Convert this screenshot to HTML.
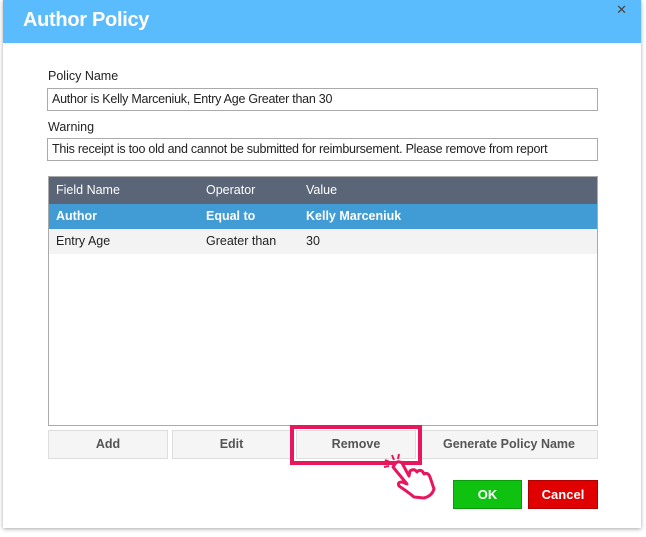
<!DOCTYPE html>
<html><head><style>
body{margin:0;width:646px;height:537px;background:#fff;font-family:"Liberation Sans",sans-serif;position:relative;overflow:hidden}
.dlg{position:absolute;left:3px;top:0;width:638px;height:528px;background:#fff;box-shadow:0 1px 4px rgba(0,0,0,.35)}
.hd{position:absolute;left:0;top:0;width:638px;height:43px;background:#5bbcfd}
.hd b{position:absolute;left:20px;top:9px;color:#fff;font-size:20px;letter-spacing:-0.3px}
.x{position:absolute;right:14px;top:2px;font-size:13px;color:#444}
.lbl{position:absolute;left:48px;font-size:12.5px;color:#222}
.in{position:absolute;left:47px;width:545px;height:21px;border:1px solid #aaa;font-size:12.5px;letter-spacing:-0.25px;line-height:21px;padding-left:4px;color:#222;white-space:nowrap;overflow:hidden}
.tbl{position:absolute;left:48px;top:176px;width:548px;height:248px;border:1px solid #aaa}
.r{position:absolute;left:0;width:548px;font-size:12.5px}
.r span{position:absolute;top:6px}
.btn{position:absolute;top:430px;height:29px;border:1px solid #ddd;background:#f5f5f5;color:#555;font-size:12.5px;font-weight:bold;text-align:center;line-height:27px;box-sizing:border-box}
</style></head><body>
<div class="dlg">
<div class="hd"><b>Author Policy</b><span class="x">✕</span></div>
</div>
<div class="lbl" style="top:69px">Policy Name</div>
<div class="in" style="top:88px">Author is Kelly Marceniuk, Entry Age Greater than 30</div>
<div class="lbl" style="top:120px">Warning</div>
<div class="in" style="top:138px">This receipt is too old and cannot be submitted for reimbursement. Please remove from report</div>
<div class="tbl">
<div class="r" style="top:0;height:27px;background:#5a6577;color:#fff"><span style="left:7px">Field Name</span><span style="left:157px">Operator</span><span style="left:257px">Value</span></div>
<div class="r" style="top:27px;height:25px;background:#419bd5;color:#fff;font-weight:bold"><span style="left:7px;top:5px">Author</span><span style="left:157px;top:5px">Equal to</span><span style="left:257px;top:5px">Kelly Marceniuk</span></div>
<div class="r" style="top:52px;height:25px;background:#f3f3f3;color:#222"><span style="left:7px;top:5px">Entry Age</span><span style="left:157px;top:5px">Greater than</span><span style="left:257px;top:5px">30</span></div>
</div>
<div class="btn" style="left:48px;width:120px">Add</div>
<div class="btn" style="left:172px;width:119px">Edit</div>
<div class="btn" style="left:296px;width:120px">Remove</div>
<div class="btn" style="left:420px;width:178px">Generate Policy Name</div>
<div style="position:absolute;left:290px;top:425px;width:124px;height:32px;border:4px solid #e8175d"></div>
<svg style="position:absolute;left:382px;top:452px" width="60" height="50" viewBox="0 0 60 50">
<g stroke="#e8175d" stroke-width="3" fill="#fff" stroke-linecap="round" stroke-linejoin="round">
<path d="M13 12 Q16 8 20 11 L27 24 L28 19 Q32 16 35 20 L36 19 Q40 17 42 22 Q46 20 48 25 L52 37 Q50 44 42 46 L32 45 Q26 40 17 34 Q15 30 20 30 L25 32 L11 15 Z"/>
</g>
<g stroke="#e8175d" stroke-width="2"><path d="M10 3 L12 8 M3 8 L8 10 M17 2 L16 7 M2 15 L7 14"/></g>
</svg>
<div style="position:absolute;left:453px;top:480px;width:69px;height:29px;background:#0fc20f;border:1px solid #0a9a0a;box-sizing:border-box;color:#fff;font-weight:bold;font-size:13px;text-align:center;line-height:27px">OK</div>
<div style="position:absolute;left:528px;top:480px;width:70px;height:29px;background:#e00000;border:1px solid #b00000;box-sizing:border-box;color:#fff;font-weight:bold;font-size:13px;text-align:center;line-height:27px">Cancel</div>
</body></html>
